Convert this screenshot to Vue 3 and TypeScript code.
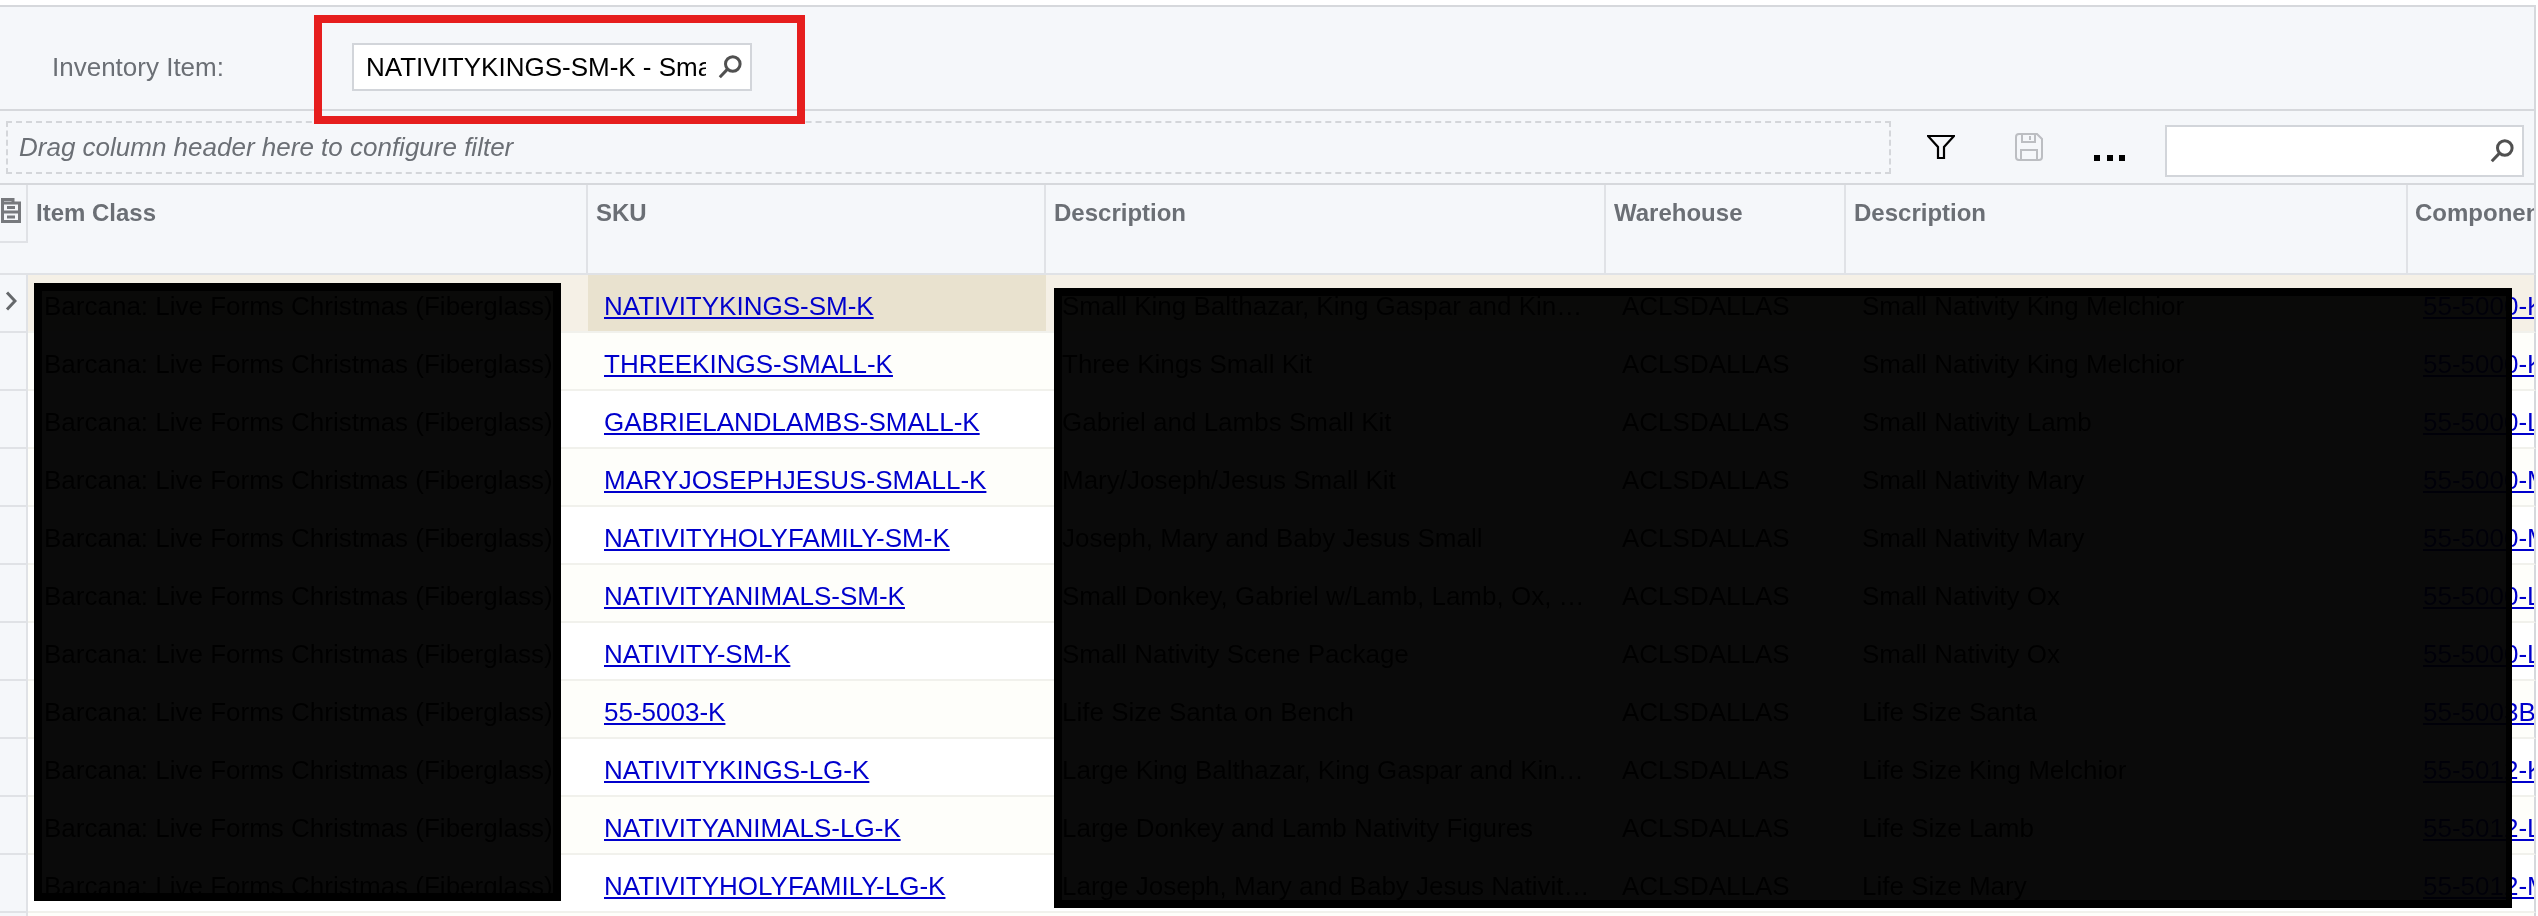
<template>
  <div class="page">
    <div class="form-bar">
      <span class="form-label">Inventory Item:</span>
      <div class="selector">
        <span class="selector-text">NATIVITYKINGS-SM-K - Small King Balthazar</span>
        <svg class="lens" viewBox="0 0 24 24"><circle cx="14.8" cy="9" r="7.3" /><path d="M9.3 14.4 1.8 22.2" /></svg>
      </div>
      <div class="highlight"></div>
    </div>

    <div class="toolbar">
      <div class="drop-zone">Drag column header here to configure filter</div>
      <svg class="tool-filter" viewBox="0 0 28 24"><path d="M1 1h26L17 12v11h-6V12z" /></svg>
      <svg class="tool-save" viewBox="0 0 28 28">
        <path d="M4 1h18l5 5v18a3 3 0 0 1-3 3H4a3 3 0 0 1-3-3V4a3 3 0 0 1 3-3z" />
        <path d="M7 1v8h13V1M15 3v4M6 27V17h16v10" />
      </svg>
      <div class="tool-more"><i></i><i></i><i></i></div>
      <div class="search">
        <svg class="lens" viewBox="0 0 24 24"><circle cx="14.8" cy="9" r="7.3" /><path d="M9.3 14.4 1.8 22.2" /></svg>
      </div>
    </div>

    <div class="grid">
      <div class="head-row">
        <div class="head gutter">
          <svg class="cabinet" viewBox="0 0 20 25">
            <path d="M1.5 5h17v18.5h-17zM1.5 5V1.5H12V5M1.5 14h17" />
            <path d="M6 9.5h8M6 19h8" />
          </svg>
        </div>
        <div v-for="col in columns" :key="col.key" class="head">{{ col.title }}</div>
      </div>

      <div v-for="(row, i) in rows" :key="i" class="row" :class="{ active: i === 0, alt: i % 2 === 1 }">
        <div class="gutter">
          <svg v-if="i === 0" class="caret" viewBox="0 0 12 20"><path d="M2 1.5l8 8.5-8 8.5" /></svg>
        </div>
        <div class="cell">Barcana: Live Forms Christmas (Fiberglass)</div>
        <div class="cell sku"><a href="#">{{ row.sku }}</a></div>
        <div class="cell">{{ row.desc }}</div>
        <div class="cell">ACLSDALLAS</div>
        <div class="cell">{{ row.part }}</div>
        <div class="cell comp"><a href="#">{{ row.comp }}</a></div>
      </div>
      <div class="row tail"><div class="gutter"></div></div>

      <div class="redact redact-class"></div>
      <div class="redact redact-desc"></div>
    </div>
  </div>
</template>

<script setup lang="ts">
const columns = [
  { key: 'cls', title: 'Item Class' },
  { key: 'sku', title: 'SKU' },
  { key: 'desc', title: 'Description' },
  { key: 'wh', title: 'Warehouse' },
  { key: 'part', title: 'Description' },
  { key: 'comp', title: 'Component' },
]

const rows = [
  { sku: 'NATIVITYKINGS-SM-K', desc: 'Small King Balthazar, King Gaspar and King Melchior', part: 'Small Nativity King Melchior', comp: '55-5000-K' },
  { sku: 'THREEKINGS-SMALL-K', desc: 'Three Kings Small Kit', part: 'Small Nativity King Melchior', comp: '55-5000-K' },
  { sku: 'GABRIELANDLAMBS-SMALL-K', desc: 'Gabriel and Lambs Small Kit', part: 'Small Nativity Lamb', comp: '55-5000-L' },
  { sku: 'MARYJOSEPHJESUS-SMALL-K', desc: 'Mary/Joseph/Jesus Small Kit', part: 'Small Nativity Mary', comp: '55-5000-M' },
  { sku: 'NATIVITYHOLYFAMILY-SM-K', desc: 'Joseph, Mary and Baby Jesus Small', part: 'Small Nativity Mary', comp: '55-5000-M' },
  { sku: 'NATIVITYANIMALS-SM-K', desc: 'Small Donkey, Gabriel w/Lamb, Lamb, Ox, and Sheep', part: 'Small Nativity Ox', comp: '55-5000-L' },
  { sku: 'NATIVITY-SM-K', desc: 'Small Nativity Scene Package', part: 'Small Nativity Ox', comp: '55-5000-L' },
  { sku: '55-5003-K', desc: 'Life Size Santa on Bench', part: 'Life Size Santa', comp: '55-5003BB' },
  { sku: 'NATIVITYKINGS-LG-K', desc: 'Large King Balthazar, King Gaspar and King Melchior', part: 'Life Size King Melchior', comp: '55-5012-K' },
  { sku: 'NATIVITYANIMALS-LG-K', desc: 'Large Donkey and Lamb Nativity Figures', part: 'Life Size Lamb', comp: '55-5012-L' },
  { sku: 'NATIVITYHOLYFAMILY-LG-K', desc: 'Large Joseph, Mary and Baby Jesus Nativity Figures', part: 'Life Size Mary', comp: '55-5012-M' },
]
</script>

<style>
html,
body {
  margin: 0;
  background: #fff;
  overflow: hidden;
}
</style>

<style scoped>
.page {
  width: 2538px;
  height: 916px;
  overflow: hidden;
  padding-top: 5px;
  box-sizing: border-box;
  font-family: 'Liberation Sans', Arial, sans-serif;
  background: #fff;
}
.form-bar {
  position: relative;
  width: 2536px;
  height: 106px;
  box-sizing: border-box;
  background: #f5f7fa;
  border-top: 2px solid #d6d8dc;
  border-bottom: 2px solid #d6d8dc;
  border-right: 2px solid #d6d8dc;
  display: flex;
  align-items: flex-start;
}
.form-label {
  margin: 42px 0 0 52px;
  width: 300px;
  font-size: 26px;
  line-height: 36px;
  color: #6b6f75;
}
.selector {
  margin-top: 36px;
  width: 400px;
  height: 48px;
  box-sizing: border-box;
  border: 2px solid #d2d5da;
  background: #fff;
  display: flex;
  align-items: center;
  padding: 0 8px 0 12px;
}
.selector-text {
  width: 340px;
  flex: none;
  overflow: hidden;
  white-space: nowrap;
  font-size: 26px;
  color: #000;
}
.lens {
  width: 24px;
  height: 24px;
  margin-left: auto;
  fill: none;
  stroke: #505050;
  stroke-width: 3;
  flex: none;
}
.highlight {
  position: absolute;
  left: 314px;
  top: 8px;
  width: 491px;
  height: 109px;
  box-sizing: border-box;
  border: 8px solid #e61e1e;
}
.toolbar {
  width: 2536px;
  height: 74px;
  box-sizing: border-box;
  background: #f5f7fa;
  display: flex;
  align-items: flex-start;
  border-bottom: 2px solid #d6d8dc;
  border-right: 2px solid #d6d8dc;
}
.drop-zone {
  margin: 10px 0 0 6px;
  width: 1885px;
  height: 53px;
  box-sizing: border-box;
  border: 2px dashed #d4d6da;
  padding-left: 11px;
  font-size: 26px;
  font-style: italic;
  line-height: 48px;
  color: #6b6f75;
}
.tool-filter {
  margin: 24px 0 0 36px;
  width: 28px;
  height: 24px;
  fill: none;
  stroke: #000;
  stroke-width: 2.2;
  flex: none;
}
.tool-save {
  margin: 22px 0 0 60px;
  width: 28px;
  height: 28px;
  fill: none;
  stroke: #bcbec2;
  stroke-width: 2;
  flex: none;
}
.tool-more {
  margin: 44px 0 0 51px;
  width: 31px;
  display: flex;
  justify-content: space-between;
  flex: none;
}
.tool-more i {
  display: block;
  width: 6px;
  height: 6px;
  background: #000;
}
.search {
  margin: 14px 0 0 40px;
  width: 359px;
  height: 52px;
  box-sizing: border-box;
  border: 2px solid #d2d5da;
  background: #fff;
  display: flex;
  align-items: center;
  padding-right: 8px;
}
.grid {
  position: relative;
}
.head-row,
.row {
  display: grid;
  grid-template-columns: 28px 560px 458px 560px 240px 562px 126px;
  width: 2536px;
  box-sizing: border-box;
}
.head-row {
  height: 90px;
  background: #f5f7fa;
  border-bottom: 2px solid #e0e2e6;
  border-right: 2px solid #d6d8dc;
}
.head {
  border-right: 2px solid #e0e2e6;
  padding: 12px 0 0 8px;
  font-size: 24px;
  line-height: 32px;
  font-weight: 700;
  color: #6b6f75;
  white-space: nowrap;
  overflow: hidden;
}
.head:last-child {
  border-right: 0;
  padding-left: 7px;
}
.head.gutter {
  display: block;
  padding: 13px 0 0 1px;
  margin: 0;
  background: none;
}
.cabinet {
  width: 20px;
  height: 25px;
  fill: none;
  stroke: #77797d;
  stroke-width: 3;
  display: block;
}
.row {
  height: 58px;
  background: #fff;
  border-bottom: 2px solid #f1f1ec;
  border-right: 2px solid #d6d8dc;
}
.row.alt,
.row.tail {
  background: #fefefa;
}
.row.active {
  background: #f5f0e6;
}
.gutter {
  background: #f5f7fa;
  box-sizing: border-box;
  height: 58px;
  border-right: 2px solid #e0e2e6;
  border-bottom: 2px solid #e0e2e6;
  display: flex;
  align-items: center;
  justify-content: center;
}
.caret {
  width: 12px;
  height: 20px;
  margin: 0 4px 4px 0;
  fill: none;
  stroke: #65686b;
  stroke-width: 3;
}
.cell {
  height: 56px;
  padding: 0 16px 0 16px;
  font-size: 26px;
  line-height: 62px;
  color: #000;
  white-space: nowrap;
  overflow: hidden;
  text-overflow: ellipsis;
}
.cell.comp {
  padding: 0 0 0 15px;
  text-overflow: clip;
}
.row.active .sku {
  background: #e9e2cf;
}
.cell a {
  color: #0000cc;
  text-decoration: underline;
}
.redact {
  position: absolute;
  background: #0a0a0a;
  border: 8px solid #000;
  box-sizing: border-box;
  mix-blend-mode: multiply;
}
.redact-class {
  left: 34px;
  top: 98px;
  width: 527px;
  height: 618px;
}
.redact-desc {
  left: 1054px;
  top: 103px;
  width: 1458px;
  height: 620px;
  border-right-width: 6px;
}
</style>
